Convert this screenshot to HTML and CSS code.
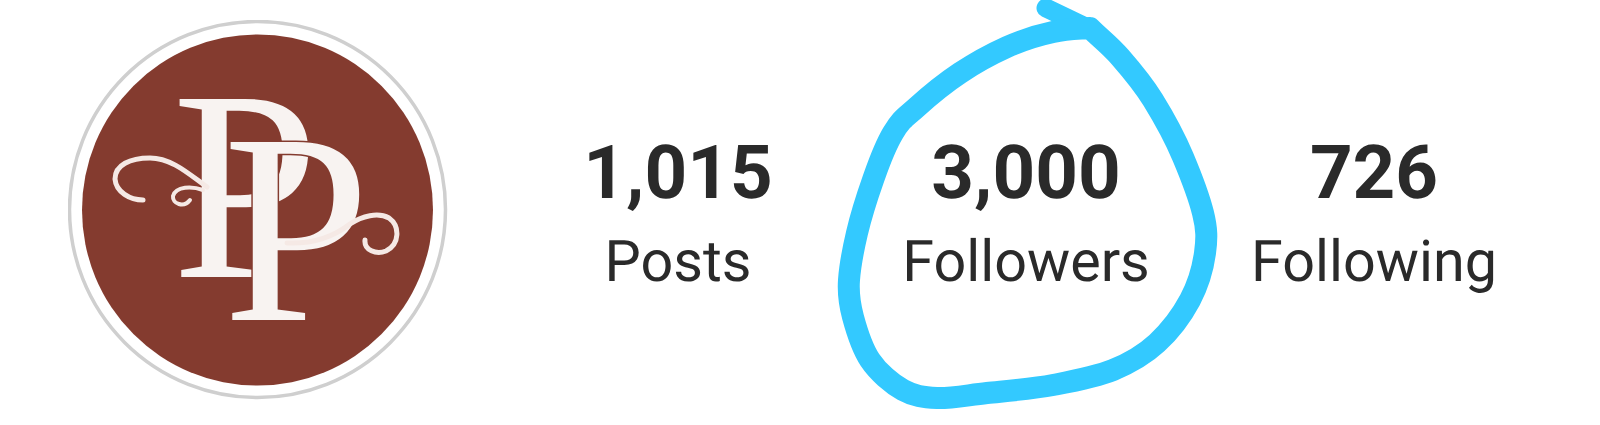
FILE: index.html
```html
<!doctype html>
<html>
    <head>
        <title>Profile stats</title>
        <link rel="stylesheet" href="styles.css">
    </head>
    <body>
        <div class="profile">
            <!-- Avatar -->
            <svg class="avatar" viewBox="68 20 380 380" role="img" aria-label="PP logo">
                <circle class="avatar-ring" cx="257.5" cy="209.5" r="188"/>
                <circle class="avatar-fill" cx="257.5" cy="210" r="175.5"/>
                <text class="monogram" transform="translate(172 277) scale(0.97 1)">P<tspan class="monogram-front" x="52.6" y="43">P</tspan></text>
                <path class="swash" d="M143 200C130 200 116 192 115 179C115 165 130 158 150 158C172 158 190 175 207 187"/>
                <path class="swash swash-thin" d="M203 190C192 186 176 186 173 196C172 204 184 208 190 200"/>
                <path class="swash" d="M287 243C310 244 332 238 350 224C362 216 378 212 389 218C400 226 400 244 386 251C376 255 364 250 365 240"/>
            </svg>

            <!-- Stats -->
            <div class="stats">
                <div class="stat">
                    <div class="stat-number">1,015</div>
                    <div class="stat-label">Posts</div>
                </div>
                <div class="stat">
                    <div class="stat-number">3,000</div>
                    <div class="stat-label">Followers</div>
                </div>
                <div class="stat">
                    <div class="stat-number">726</div>
                    <div class="stat-label">Following</div>
                </div>
            </div>
        </div>

        <!-- Hand drawn circle on top of the screenshot -->
        <svg class="scribble" viewBox="0 0 1600 425">
            <path class="scribble-tick" d="M1046 8L1092 30"/>
            <path class="scribble-line" d="M1090 28C1100 38 1109.5 45 1120 57S1142.5 83 1153 100S1175 138 1183 157S1199 197 1203 213S1207 238.5 1205 253S1198 285 1190 300S1170 331 1157 343S1130 363 1113 370S1074 381 1053 385S1006 391 987 393S951 398.5 937 398S914 396 903 390S878 372 870 360S856.5 330 853 317S848 294 849 280S853 250 857 233S867 197 873 180S884 148 893 133S906 117 917 107S945 83 960 73S991.5 54 1007 47S1039 35 1053 32S1077 29 1090 28"/>
        </svg>
    </body>
</html>
```

FILE: styles.css
```css
html, body {
    margin: 0;
    height: 425px;
    overflow: hidden;
    background-color: #fff;
}

.profile {
    display: flex;
    padding-left: 68px;
}

.avatar {
    width: 380px;
    height: 380px;
    margin-top: 20px;
    flex-shrink: 0;
}

.avatar-ring {
    fill: #fff;
    stroke: #cfcfcf;
    stroke-width: 3.5;
}

.avatar-fill {
    fill: #843b2f;
}

.monogram {
    font-family: "Liberation Serif", serif;
    font-size: 272px;
    fill: #f8f3f1;
}

.monogram-front {
    stroke: #843b2f;
    stroke-width: 3px;
    paint-order: stroke;
}

.swash {
    fill: none;
    stroke: #f5e9e5;
    stroke-width: 5;
    stroke-linecap: round;
}

.swash-thin {
    stroke-width: 4;
}

.stats {
    display: grid;
    grid-template-columns: repeat(3, 348px);
    margin-left: 56px;
    padding-top: 137px;
    font-family: Roboto, sans-serif;
    color: #2a2a2a;
    text-align: center;
    text-rendering: geometricPrecision;
}

.stat-number {
    font-size: 74.5px;
    line-height: 74px;
    font-weight: 700;
    margin-bottom: 20px;
}

.stat-label {
    font-size: 57.5px;
    line-height: 64px;
}

.scribble {
    position: absolute;
    top: 0;
    left: 0;
    width: 1600px;
    height: 425px;
}

.scribble-line,
.scribble-tick {
    fill: none;
    stroke: #33c9ff;
    stroke-linecap: round;
    stroke-linejoin: round;
}

.scribble-line {
    stroke-width: 22;
}

.scribble-tick {
    stroke-width: 19;
}
```
